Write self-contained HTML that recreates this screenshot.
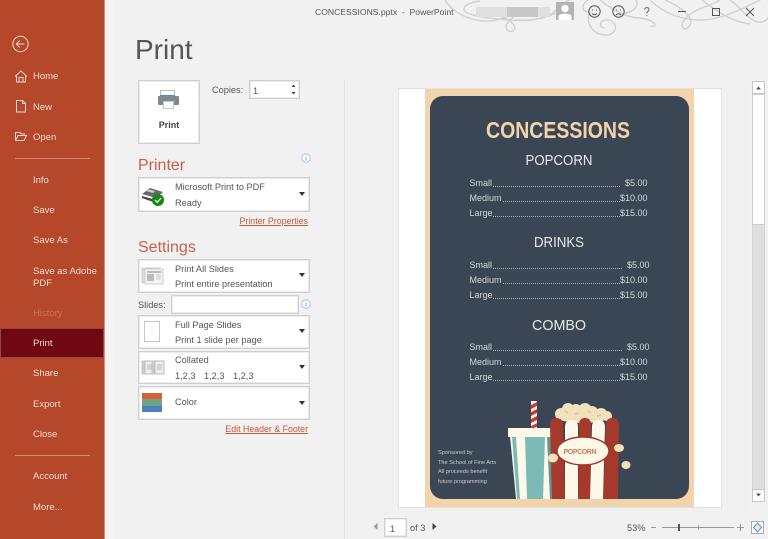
<!DOCTYPE html>
<html><head><meta charset="utf-8"><style>
html,body{margin:0;padding:0}
body{width:768px;height:539px;overflow:hidden;background:#f1f1f1;position:relative;font-family:"Liberation Sans",sans-serif;color:#444;filter:blur(.3px)}
.a{position:absolute;white-space:nowrap}
.n{position:absolute;left:33px;font-size:9.5px;line-height:12px;color:#f4dcd3;white-space:nowrap}
.t{font-size:9.2px;line-height:12px;color:#555}
.box{position:absolute;background:#fff;border:1px solid #cfcfcf;box-sizing:border-box;box-shadow:0 0 0 1px #ececec inset}
.h{position:absolute;left:138px;font-size:16px;line-height:20px;color:#cb6046}
.l{position:absolute;font-size:8.800px;line-height:12px;color:#c9573a;text-decoration:underline;white-space:nowrap}
.arr{position:absolute;width:0;height:0;border-left:3.5px solid transparent;border-right:3.5px solid transparent;border-top:4px solid #333}
</style></head><body>
<div class="a" style="left:0;top:0;width:104px;height:539px;background:#b5482a"></div>
<div class="a" style="left:104px;top:0;width:1px;height:539px;background:#d48f7c"></div>
<div class="a" style="left:105px;top:0;width:10px;height:539px;background:#f4f4f4"></div>
<svg class="a" style="left:0;top:0" width="104" height="150" fill="none" stroke="#f2d6cb" stroke-width="1">
<circle cx="20.500" cy="44" r="7.700"/><path d="M24.500 44H16.500M19.800 40.500L16.300 44L19.800 47.500"/>
<path d="M15 76.500L21 71L27 76.500M16.500 75.500V82H25.500V75.500M19 82V77.500H23V82"/>
<path d="M16.500 100.500H22.500L25.500 103.500V112H16.500ZM22.500 100.500V103.500H25.500"/>
<path d="M15.500 140.500V132.500H20L21.500 134H25M15.500 140.500H24L26.500 135.500H18L15.500 140.500"/>
</svg>
<div class="n" style="top:71px">Home</div>
<div class="n" style="top:102px">New</div>
<div class="n" style="top:132px">Open</div>
<div class="a" style="left:15px;top:158px;width:75px;height:1px;background:#d98a73"></div>
<div class="n" style="top:175px">Info</div>
<div class="n" style="top:205px">Save</div>
<div class="n" style="top:235px">Save As</div>
<div class="n" style="top:266px">Save as Adobe</div>
<div class="n" style="top:278px">PDF</div>
<div class="n" style="top:308px;color:#d2705a">History</div>
<div class="a" style="left:0;top:328px;width:104px;height:30px;background:#710711;border:1px solid #8a4a4c;box-sizing:border-box"></div>
<div class="n" style="top:338px">Print</div>
<div class="n" style="top:368px">Share</div>
<div class="n" style="top:399px">Export</div>
<div class="n" style="top:429px">Close</div>
<div class="a" style="left:15px;top:455px;width:75px;height:1px;background:#d98a73"></div>
<div class="n" style="top:471px">Account</div>
<div class="n" style="top:502px">More...</div>

<!-- title bar decoration -->
<svg class="a" style="left:440px;top:0" width="328" height="40" fill="none" stroke="#d0d0d0" stroke-width="1.400">
<path d="M5 0C12 12 30 22 50 21C62 20 72 14 72 14"/>
<path d="M40 1C30 2 23 6 24 10C26 15 45 18 60 19C80 21 95 22 110 15C118 10 120 3 130 0"/>
<path d="M60 16C72 20 78 28 73 31C67 33 64 27 68 22C72 17 78 14 85 10"/>
<path d="M75 20C95 22 115 15 125 8"/>
<path d="M148 0C140 6 142 12 150 12M150 12C145 22 152 36 168 35C178 33 178 22 168 20C160 19 158 27 164 28"/>
<path d="M160 0C170 8 185 18 200 18C207 19 212 21 212 22C218 24 214 28 210 26"/>
<path d="M196 0C200 8 190 14 178 14"/>
<path d="M210 0C225 15 245 20 260 20C280 20 300 10 320 0"/>
<path d="M225 0C240 6 255 18 250 25C246 32 240 28 243 22C246 16 255 10 270 5L280 0"/>
<path d="M290 0C300 6 310 24 322 22C330 20 334 10 328 0"/>
<path d="M262 0C275 10 292 22 310 24"/>
</svg>
<div class="a" style="left:315px;top:6px;font-size:8.600px;line-height:12px;color:#555">CONCESSIONS.pptx&nbsp; -&nbsp; PowerPoint</div>
<div class="a" style="left:476px;top:7px;width:74px;height:10px;background:#e0e0e0"></div>
<div class="a" style="left:507px;top:7px;width:31px;height:10px;background:#c8c8c8"></div>
<svg class="a" style="left:556px;top:2px" width="212" height="20" fill="none" stroke="#555" stroke-width="1">
<rect x="0" y="0" width="18" height="18" fill="#b4b4b4" stroke="none"/>
<circle cx="9" cy="6.500" r="3.700" fill="#fff" stroke="none"/><path d="M2.500 18V14C3 11 15 11 15.500 14V18Z" fill="#fff" stroke="none"/>
<circle cx="38.500" cy="9.500" r="5.700"/><path d="M36 11.500Q38.500 14 41 11.500M36.500 7.500V8.500M40.500 7.500V8.500"/>
<circle cx="62.500" cy="9.500" r="5.700"/><path d="M60 13Q62.500 10.500 65 13M60.500 7.500V8.500M64.500 7.500V8.500"/>
<path d="M88.500 7.500C89 5 93 5 93 7.500C93 9.500 90.800 9.500 90.800 11.500M90.800 13V14" stroke="#666"/>
<path d="M122 9.500H130" stroke="#555"/>
<rect x="156.500" y="6.500" width="7" height="7"/>
<path d="M190 6L198 14M198 6L190 14"/>
</svg>

<div class="a" style="left:135px;top:32px;font-size:28px;line-height:36px;color:#555">Print</div>

<div class="box" style="left:138px;top:80px;width:62px;height:64px"></div>
<svg class="a" style="left:156px;top:89px" width="24" height="22">
<rect x="4.500" y="1.500" width="14" height="7" fill="#fff" stroke="#bbb"/><rect x="4" y="6" width="15" height="2" fill="#4f8ccb"/>
<rect x="2" y="7" width="21" height="9" rx="1" fill="#808890"/><rect x="7.500" y="12.500" width="10" height="7" fill="#fff" stroke="#b9cad8"/>
</svg>
<div class="a" style="left:138px;top:119px;width:62px;text-align:center;font-size:9px;line-height:12px;font-weight:bold;color:#444">Print</div>
<div class="a t" style="left:212px;top:84px">Copies:</div>
<div class="box" style="left:249px;top:80px;width:51px;height:19px"></div>
<div class="a t" style="left:253px;top:85px">1</div>
<svg class="a" style="left:290px;top:82px" width="8" height="15" fill="#444"><path d="M1.500 5L3.500 2.500L5.500 5ZM1.500 10L3.500 12.500L5.500 10Z"/></svg>

<div class="h" style="top:156px">Printer</div>
<svg class="a" style="left:301px;top:153px" width="10" height="10"><circle cx="5" cy="5" r="4.300" fill="#fff" stroke="#a5c2e4"/><path d="M5 4V7.500M5 2.500V3.300" stroke="#7aa3d6"/></svg>
<div class="box" style="left:138px;top:177px;width:172px;height:35px"></div>
<svg class="a" style="left:141px;top:186px" width="24" height="22">
<path d="M1 8L9 2L22 6L15 12Z" fill="#666"/><path d="M1 10L15 14L15 17L1 12Z" fill="#444"/><path d="M6 3L14 5L12 7L5 5Z" fill="#ccc"/>
<circle cx="17" cy="14" r="6" fill="#108a10"/><path d="M14 14L16.300 16.300L20 12" stroke="#fff" stroke-width="1.300" fill="none"/>
</svg>
<div class="a t" style="left:175px;top:181px">Microsoft Print to PDF</div>
<div class="a t" style="left:175px;top:197px">Ready</div>
<div class="arr" style="left:299px;top:192px"></div>
<div class="l" style="right:460px;top:215px">Printer Properties</div>

<div class="h" style="top:238px">Settings</div>
<div class="box" style="left:138px;top:259px;width:172px;height:34px"></div>
<svg class="a" style="left:141px;top:266px" width="24" height="20">
<rect x="1" y="2" width="18" height="15" fill="#ddd" stroke="#ccc"/><rect x="4" y="3" width="18" height="15" fill="#f3f3f3" stroke="#ccc"/><rect x="6" y="5" width="14" height="2" fill="#bbb"/><rect x="6" y="8" width="7" height="7" fill="#bbb"/><path d="M15 9H20M15 11H20M15 13H20" stroke="#ccc"/>
</svg>
<div class="a t" style="left:175px;top:263px">Print All Slides</div>
<div class="a t" style="left:175px;top:278px">Print entire presentation</div>
<div class="arr" style="left:299px;top:273px"></div>
<div class="a t" style="left:138px;top:299px">Slides:</div>
<div class="box" style="left:171px;top:295px;width:128px;height:19px"></div>
<svg class="a" style="left:301px;top:299px" width="10" height="10"><circle cx="5" cy="5" r="4.300" fill="#fff" stroke="#a5c2e4"/><path d="M5 4V7.500M5 2.500V3.300" stroke="#7aa3d6"/></svg>
<div class="box" style="left:138px;top:315px;width:172px;height:34px"></div>
<div class="a" style="left:144px;top:321px;width:16px;height:21px;background:#fff;border:1px solid #c6c6c6;box-sizing:border-box"></div>
<div class="a t" style="left:175px;top:319px">Full Page Slides</div>
<div class="a t" style="left:175px;top:334px">Print 1 slide per page</div>
<div class="arr" style="left:299px;top:329px"></div>
<div class="box" style="left:138px;top:351px;width:172px;height:33px"></div>
<svg class="a" style="left:141px;top:359px" width="24" height="16">
<rect x="1" y="2" width="10" height="13" fill="#ccc" stroke="#c4c4c4"/><rect x="4" y="2" width="9" height="13" fill="#eee" stroke="#bbb"/><rect x="11" y="2" width="10" height="13" fill="#ccc" stroke="#c4c4c4"/><rect x="14" y="2" width="9" height="13" fill="#eee" stroke="#bbb"/><path d="M6 6H11M6 8H11M6 10H11M16 6H21M16 8H21M16 10H21" stroke="#bbb"/>
</svg>
<div class="a t" style="left:175px;top:354px">Collated</div>
<div class="a t" style="left:175px;top:370px">1,2,3</div>
<div class="a t" style="left:204px;top:370px">1,2,3</div>
<div class="a t" style="left:233px;top:370px">1,2,3</div>
<div class="arr" style="left:299px;top:365px"></div>
<div class="box" style="left:138px;top:386px;width:172px;height:34px"></div>
<div class="a" style="left:142px;top:393px;width:20px;height:6px;background:#d95f3b"></div>
<div class="a" style="left:142px;top:399px;width:20px;height:7px;background:#70a286"></div>
<div class="a" style="left:142px;top:406px;width:20px;height:6px;background:#4a80bc"></div>
<div class="a t" style="left:175px;top:396px">Color</div>
<div class="arr" style="left:299px;top:401px"></div>
<div class="l" style="right:460px;top:423px">Edit Header &amp; Footer</div>

<div class="a" style="left:344px;top:80px;width:1px;height:459px;background:#e2e2e2"></div>
<div class="a" style="left:367px;top:82px;width:381px;height:432px;background:#f0f0f0"></div>

<!-- page -->
<div class="a" style="left:398px;top:88px;width:324px;height:420px;background:#fff;border:1px solid #e2e2e2;box-sizing:border-box"></div>
<svg class="a" style="left:425px;top:89px;font-family:'Liberation Sans',sans-serif" width="269" height="418">
<rect width="269" height="418" fill="#f2d4ac"/>
<rect x="5" y="7" width="259" height="403" rx="13" fill="#3b4655"/>
<text x="133" y="49" text-anchor="middle" font-size="23" font-weight="bold" fill="#f3d4aa" textLength="144" lengthAdjust="spacingAndGlyphs">CONCESSIONS</text>
<g fill="#e9e9e6" text-anchor="middle" font-size="14.500">
<text x="134" y="76" textLength="67" lengthAdjust="spacingAndGlyphs">POPCORN</text>
<text x="134" y="158" textLength="50" lengthAdjust="spacingAndGlyphs">DRINKS</text>
<text x="134" y="241" textLength="54" lengthAdjust="spacingAndGlyphs">COMBO</text>
</g>
<g fill="#d6d8d8" font-size="9">
<text x="44.500" y="97">Small</text><text x="44.500" y="112">Medium</text><text x="44.500" y="127">Large</text>
<text x="200" y="97">$5.00</text><text x="195" y="112">$10.00</text><text x="195" y="127">$15.00</text>
<text x="44.500" y="179">Small</text><text x="44.500" y="194">Medium</text><text x="44.500" y="209">Large</text>
<text x="202" y="179">$5.00</text><text x="195" y="194">$10.00</text><text x="195" y="209">$15.00</text>
<text x="44.500" y="261">Small</text><text x="44.500" y="276">Medium</text><text x="44.500" y="291">Large</text>
<text x="202" y="261">$5.00</text><text x="195" y="276">$10.00</text><text x="195" y="291">$15.00</text>
</g>
<g stroke="#aeb3b7" stroke-width="1" stroke-dasharray="1 1" fill="none">
<path d="M68 97.500H196M78 112.500H195M68 127.500H195M68 179.500H198M78 194.500H195M68 209.500H195M68 261.500H198M78 276.500H195M68 291.500H195"/>
</g>
<g fill="#c9cccd" font-size="5.600">
<text x="13" y="365">Sponsored by</text><text x="13" y="375">The School of Fine Arts</text><text x="13" y="384">All proceeds benefit</text><text x="13" y="394">future programming</text>
</g>
<!-- straw -->
<rect x="106" y="312" width="6" height="28" fill="#fff"/>
<path d="M106 316L112 313V317L106 320ZM106 323L112 320V324L106 327ZM106 330L112 327V331L106 334ZM106 337L112 334V338L106 340Z" fill="#d8372a"/>
<!-- cup -->
<path d="M85 347H127V410H91Z" fill="#fdf8e8"/>
<path d="M87 348H91L95 410H92ZM100 348H120L118 410H102Z" fill="#7bbab6"/>
<path d="M122 348H130V410H125Z" fill="#5e9695"/>
<rect x="83" y="339" width="44" height="9" fill="#fdf8e8"/>
<!-- popcorn -->
<g fill="#f1e2bd">
<ellipse cx="136" cy="325" rx="6" ry="6"/><ellipse cx="143" cy="320" rx="6" ry="6"/><ellipse cx="151" cy="322" rx="6" ry="7"/><ellipse cx="160" cy="319" rx="6" ry="5"/><ellipse cx="167" cy="323" rx="6" ry="6"/><ellipse cx="176" cy="324" rx="6" ry="5"/><ellipse cx="182" cy="327" rx="5" ry="5"/><ellipse cx="158" cy="328" rx="26" ry="6"/>
</g>
<path d="M140 322l3 2M150 325l4-1M163 322l3 2M172 327l4-1" stroke="#dcc58f" stroke-width="1.500" fill="none"/>
<!-- bucket -->
<g fill="#a5392c">
<path d="M125 336Q125 329 131 329Q138 329 138 336L140 410H127Z"/>
<path d="M154 336Q154 329 160 329Q166 329 166 336L165 410H153Z"/>
<path d="M181 336Q181 329 187 329Q194 329 194 336L193 410H178Z"/>
</g>
<g fill="#fdf8e8">
<path d="M140 338Q140 331 146.500 331Q153 331 153 338V410H140Z"/>
<path d="M167 338Q167 331 173.500 331Q180 331 180 338L178 410H165Z"/>
</g>
<ellipse cx="158" cy="362" rx="26" ry="14" fill="#fdf8e8" stroke="#a5392c" stroke-width="1.500"/>
<text x="155" y="365" text-anchor="middle" font-size="7" font-weight="bold" fill="#d07a5e" textLength="33" lengthAdjust="spacing">POPCORN</text>
<g fill="#f1e2bd">
<ellipse cx="128" cy="369" rx="5" ry="4.500"/><ellipse cx="194" cy="359" rx="5" ry="4"/><ellipse cx="201" cy="376" rx="4.500" ry="4"/>
</g>
</svg>

<!-- scrollbar -->
<div class="a" style="left:752px;top:81px;width:13px;height:421px;background:#dedede;border:1px solid #d4d4d4;box-sizing:border-box"></div>
<div class="a" style="left:752px;top:81px;width:13px;height:13px;background:#fff;border:1px solid #c6c6c6;box-sizing:border-box"></div>
<div class="a" style="left:752px;top:94px;width:13px;height:131px;background:#fff;border:1px solid #cfcfcf;box-sizing:border-box"></div>
<div class="a" style="left:752px;top:489px;width:13px;height:13px;background:#fff;border:1px solid #c6c6c6;box-sizing:border-box"></div>
<svg class="a" style="left:752px;top:81px" width="13" height="421" fill="#555"><path d="M4 8.500L6.500 5.500L9 8.500ZM4 412.500L6.500 415.500L9 412.500Z"/></svg>

<!-- bottom bar -->
<svg class="a" style="left:372px;top:522px" width="8" height="9"><path d="M5.500 1V8L1.500 4.500Z" fill="#999"/></svg>
<div class="box" style="left:384px;top:518px;width:23px;height:19px"></div>
<div class="a t" style="left:390px;top:523px">1</div>
<div class="a t" style="left:410px;top:522px">of 3</div>
<svg class="a" style="left:431px;top:522px" width="8" height="9"><path d="M1.500 1V8L5.500 4.500Z" fill="#444"/></svg>
<div class="a t" style="left:627px;top:522px">53%</div>
<svg class="a" style="left:650px;top:518px" width="118" height="20" fill="none">
<path d="M1 9.500H6M12 9.500H84M87 9.500H94" stroke="#999"/><path d="M90.500 6V13M48.500 7.500V11.500" stroke="#999"/>
<rect x="28" y="6" width="2" height="7" fill="#555"/>
<rect x="101.500" y="3.500" width="12" height="12" fill="#fff" stroke="#aaa"/><path d="M107.500 5L111.500 9.500L107.500 14L103.500 9.500Z" fill="#dbe8f6" stroke="#5f95cf"/>
</svg>
</body></html>
